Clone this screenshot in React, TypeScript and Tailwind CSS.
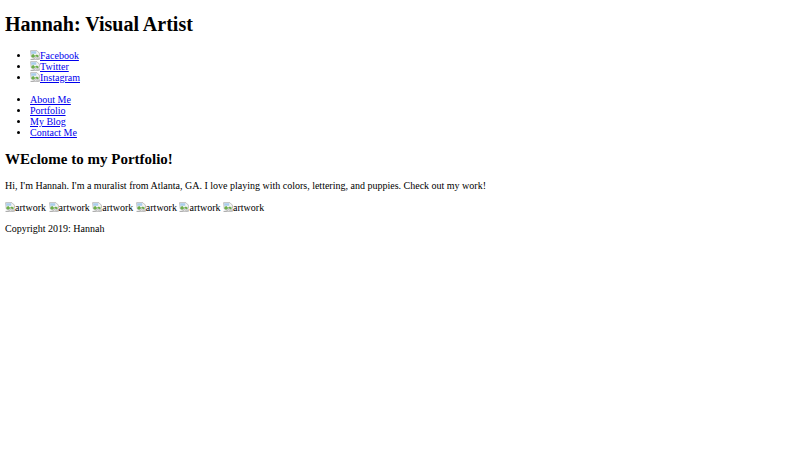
import React from "react";

const socials = ["Facebook", "Twitter", "Instagram"];
const nav = ["About Me", "Portfolio", "My Blog", "Contact Me"];
const artworks = [1, 2, 3, 4, 5, 6];

// chrome's little "broken image" glyph
const BrokenImg = () => (
  <svg width="10" height="10" viewBox="0 0 16 16" className="inline-block align-[-1px]">
    <path d="M1 1h10l4 4v5l-3 2-3-2-4 3-3-2z" fill="#f4f4f4" stroke="#9a9a9a" strokeWidth="1" />
    <path d="M2 9l3-3 3 3 3-2 3 2v1l-2 1.5-3-2-4 3-3-2z" fill="#6cae4b" />
    <path d="M2 2h8v4H2z" fill="#a9cdec" />
    <path d="M1 15h14v-3l-3 2-3-2-4 3z" fill="#e8e8e8" stroke="#9a9a9a" strokeWidth="1" />
  </svg>
);

const App = () => {
  return (
    <div className="px-[5px] pb-[5px] font-['Liberation_Serif',serif] text-[10px] leading-[normal] text-black bg-white min-h-[450px] flow-root">
      <h1 className="text-[20px] font-bold mt-[13.4px] mb-[13.4px]">Hannah: Visual Artist</h1>
      <ul className="list-disc pl-[25px] my-[10px]">
        {socials.map((s) => (
          <li key={s}>
            <a href="#" className="text-[#0000ee] underline">
              <BrokenImg />
              {s}
            </a>
          </li>
        ))}
      </ul>
      <ul className="list-disc pl-[25px] mt-[11px] mb-[10px]">
        {nav.map((n) => (
          <li key={n}>
            <a href="#" className="text-[#0000ee] underline">
              {n}
            </a>
          </li>
        ))}
      </ul>
      <h2 className="text-[15px] font-bold mt-[13.5px] mb-[11.5px]">WEclome to my Portfolio!</h2>
      <p className="my-[10px]">
        Hi, I'm Hannah. I'm a muralist from Atlanta, GA. I love playing with colors, lettering, and puppies. Check
        out my work!
      </p>
      <p className="mt-[11px] mb-[10px]">
        {artworks.map((a, i) => (
          <React.Fragment key={a}>
            <span>
              <BrokenImg />
              artwork
            </span>
            {i < artworks.length - 1 ? " " : ""}
          </React.Fragment>
        ))}
      </p>
      <p className="my-[10px]">Copyright 2019: Hannah</p>
    </div>
  );
};

export default App;
